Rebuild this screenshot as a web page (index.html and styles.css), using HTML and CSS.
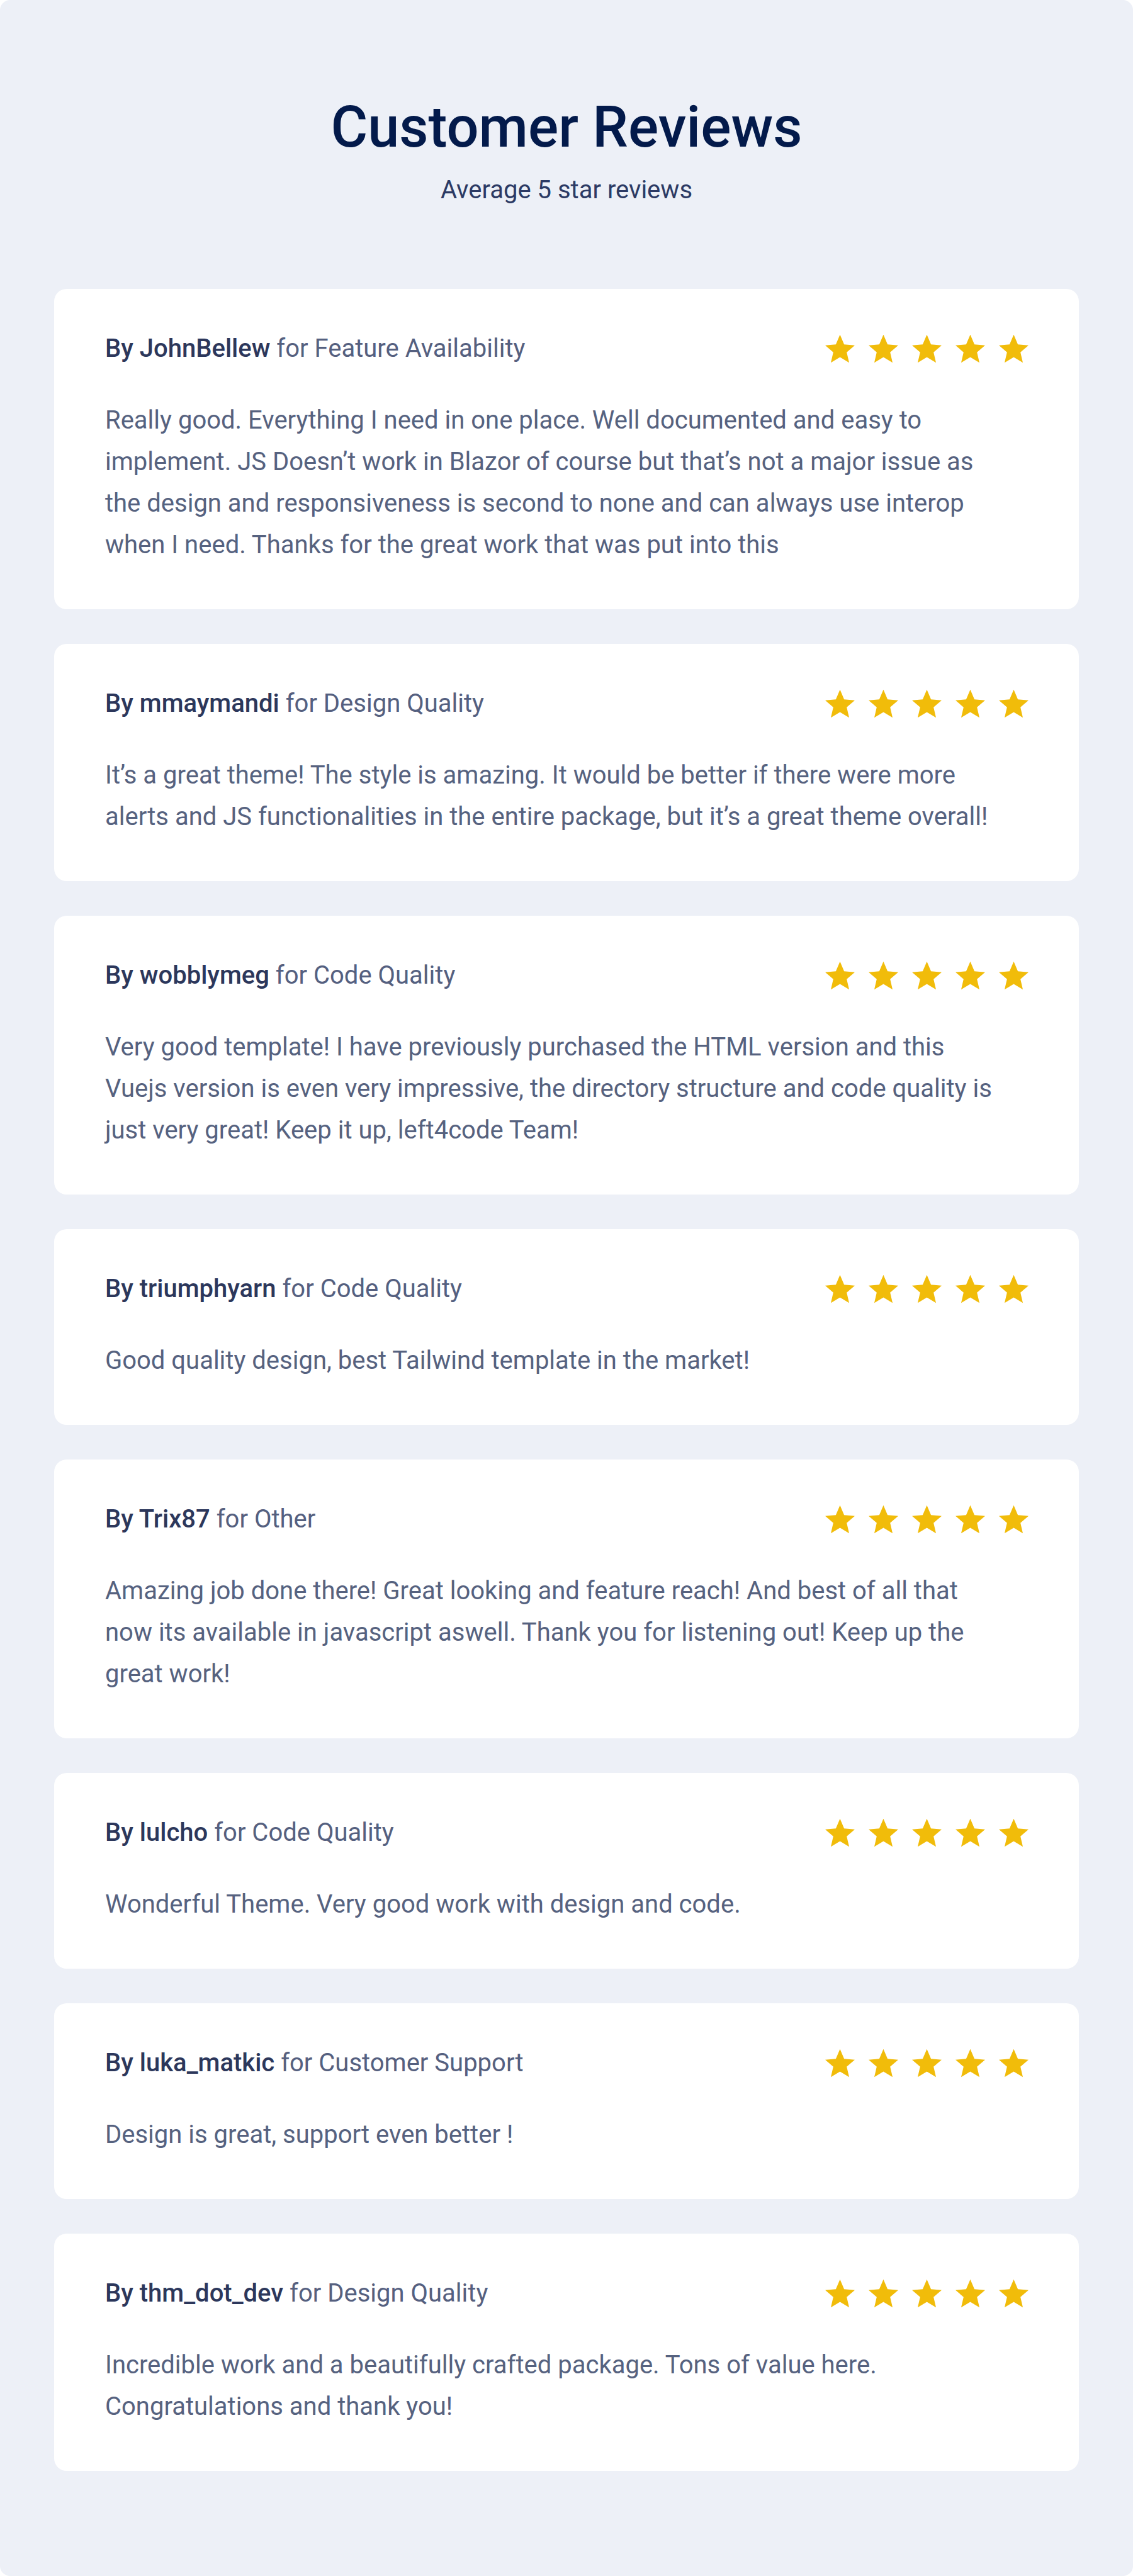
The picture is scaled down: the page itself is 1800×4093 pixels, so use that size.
FILE: index.html
```html
<!DOCTYPE html>
<html lang="en">
<head>
<meta charset="utf-8">
<title>Customer Reviews</title>
<link rel="stylesheet" href="styles.css">
</head>
<body>
<main class="page">
  <header class="intro">
    <h1 class="title">Customer Reviews</h1>
    <p class="subtitle">Average 5 star reviews</p>
  </header>
  <section class="reviews">
    <article class="card">
      <div class="card-head">
        <p class="by"><strong>By JohnBellew</strong> for Feature Availability</p>
        <div class="stars"><svg viewBox="2 2 20 19"><path d="M12 17.27L18.18 21l-1.64-7.03L22 9.24l-7.19-.61L12 2 9.19 8.63 2 9.24l5.46 4.73L5.820 21z"/></svg><svg viewBox="2 2 20 19"><path d="M12 17.27L18.18 21l-1.64-7.03L22 9.24l-7.19-.61L12 2 9.19 8.63 2 9.24l5.46 4.73L5.82 21z"/></svg><svg viewBox="2 2 20 19"><path d="M12 17.27L18.18 21l-1.64-7.03L22 9.24l-7.19-.61L12 2 9.19 8.63 2 9.24l5.46 4.73L5.82 21z"/></svg><svg viewBox="2 2 20 19"><path d="M12 17.27L18.18 21l-1.64-7.03L22 9.24l-7.19-.61L12 2 9.19 8.63 2 9.24l5.46 4.73L5.82 21z"/></svg><svg viewBox="2 2 20 19"><path d="M12 17.27L18.18 21l-1.64-7.03L22 9.24l-7.19-.61L12 2 9.19 8.63 2 9.24l5.46 4.73L5.82 21z"/></svg></div>
      </div>
      <p class="text">Really good. Everything I need in one place. Well documented and easy to implement. JS Doesn’t work in Blazor of course but that’s not a major issue as the design and responsiveness is second to none and can always use interop when I need. Thanks for the great work that was put into this</p>
    </article>
    <article class="card">
      <div class="card-head">
        <p class="by"><strong>By mmaymandi</strong> for Design Quality</p>
        <div class="stars"><svg viewBox="2 2 20 19"><path d="M12 17.27L18.18 21l-1.64-7.03L22 9.24l-7.19-.61L12 2 9.19 8.63 2 9.24l5.46 4.73L5.82 21z"/></svg><svg viewBox="2 2 20 19"><path d="M12 17.27L18.18 21l-1.64-7.03L22 9.24l-7.19-.61L12 2 9.19 8.63 2 9.24l5.46 4.73L5.82 21z"/></svg><svg viewBox="2 2 20 19"><path d="M12 17.27L18.18 21l-1.64-7.03L22 9.24l-7.19-.61L12 2 9.19 8.63 2 9.24l5.46 4.73L5.82 21z"/></svg><svg viewBox="2 2 20 19"><path d="M12 17.27L18.18 21l-1.64-7.03L22 9.24l-7.19-.61L12 2 9.19 8.63 2 9.24l5.46 4.73L5.82 21z"/></svg><svg viewBox="2 2 20 19"><path d="M12 17.27L18.18 21l-1.64-7.03L22 9.24l-7.19-.61L12 2 9.19 8.63 2 9.24l5.46 4.73L5.82 21z"/></svg></div>
      </div>
      <p class="text">It’s a great theme! The style is amazing. It would be better if there were more alerts and JS functionalities in the entire package, but it’s a great theme overall!</p>
    </article>
    <article class="card">
      <div class="card-head">
        <p class="by"><strong>By wobblymeg</strong> for Code Quality</p>
        <div class="stars"><svg viewBox="2 2 20 19"><path d="M12 17.27L18.18 21l-1.64-7.03L22 9.24l-7.19-.61L12 2 9.19 8.63 2 9.24l5.46 4.73L5.82 21z"/></svg><svg viewBox="2 2 20 19"><path d="M12 17.27L18.18 21l-1.64-7.03L22 9.24l-7.19-.61L12 2 9.19 8.63 2 9.24l5.46 4.73L5.82 21z"/></svg><svg viewBox="2 2 20 19"><path d="M12 17.27L18.18 21l-1.64-7.03L22 9.24l-7.19-.61L12 2 9.19 8.63 2 9.24l5.46 4.73L5.82 21z"/></svg><svg viewBox="2 2 20 19"><path d="M12 17.27L18.18 21l-1.64-7.03L22 9.24l-7.19-.61L12 2 9.19 8.63 2 9.24l5.46 4.73L5.82 21z"/></svg><svg viewBox="2 2 20 19"><path d="M12 17.27L18.18 21l-1.64-7.03L22 9.24l-7.19-.61L12 2 9.19 8.63 2 9.24l5.46 4.73L5.82 21z"/></svg></div>
      </div>
      <p class="text">Very good template! I have previously purchased the HTML version and this Vuejs version is even very impressive, the directory structure and code quality is just very great! Keep it up, left4code Team!</p>
    </article>
    <article class="card">
      <div class="card-head">
        <p class="by"><strong>By triumphyarn</strong> for Code Quality</p>
        <div class="stars"><svg viewBox="2 2 20 19"><path d="M12 17.27L18.18 21l-1.64-7.03L22 9.24l-7.19-.61L12 2 9.19 8.63 2 9.24l5.46 4.73L5.82 21z"/></svg><svg viewBox="2 2 20 19"><path d="M12 17.27L18.18 21l-1.64-7.03L22 9.24l-7.19-.61L12 2 9.19 8.63 2 9.24l5.46 4.73L5.82 21z"/></svg><svg viewBox="2 2 20 19"><path d="M12 17.27L18.18 21l-1.64-7.03L22 9.24l-7.19-.61L12 2 9.19 8.63 2 9.24l5.46 4.73L5.82 21z"/></svg><svg viewBox="2 2 20 19"><path d="M12 17.27L18.18 21l-1.64-7.03L22 9.24l-7.19-.61L12 2 9.19 8.63 2 9.24l5.46 4.73L5.82 21z"/></svg><svg viewBox="2 2 20 19"><path d="M12 17.27L18.18 21l-1.64-7.03L22 9.24l-7.19-.61L12 2 9.19 8.63 2 9.24l5.46 4.73L5.82 21z"/></svg></div>
      </div>
      <p class="text">Good quality design, best Tailwind template in the market!</p>
    </article>
    <article class="card">
      <div class="card-head">
        <p class="by"><strong>By Trix87</strong> for Other</p>
        <div class="stars"><svg viewBox="2 2 20 19"><path d="M12 17.27L18.18 21l-1.64-7.03L22 9.24l-7.19-.61L12 2 9.19 8.63 2 9.24l5.46 4.73L5.82 21z"/></svg><svg viewBox="2 2 20 19"><path d="M12 17.27L18.18 21l-1.64-7.03L22 9.24l-7.19-.61L12 2 9.19 8.63 2 9.24l5.46 4.73L5.82 21z"/></svg><svg viewBox="2 2 20 19"><path d="M12 17.27L18.18 21l-1.64-7.03L22 9.24l-7.19-.61L12 2 9.19 8.63 2 9.24l5.46 4.73L5.82 21z"/></svg><svg viewBox="2 2 20 19"><path d="M12 17.27L18.18 21l-1.64-7.03L22 9.24l-7.19-.61L12 2 9.19 8.63 2 9.24l5.46 4.73L5.82 21z"/></svg><svg viewBox="2 2 20 19"><path d="M12 17.27L18.18 21l-1.64-7.03L22 9.24l-7.19-.61L12 2 9.19 8.63 2 9.24l5.46 4.73L5.82 21z"/></svg></div>
      </div>
      <p class="text">Amazing job done there! Great looking and feature reach! And best of all that now its available in javascript aswell. Thank you for listening out! Keep up the great work!</p>
    </article>
    <article class="card">
      <div class="card-head">
        <p class="by"><strong>By lulcho</strong> for Code Quality</p>
        <div class="stars"><svg viewBox="2 2 20 19"><path d="M12 17.27L18.18 21l-1.64-7.03L22 9.24l-7.19-.61L12 2 9.19 8.63 2 9.24l5.46 4.73L5.82 21z"/></svg><svg viewBox="2 2 20 19"><path d="M12 17.27L18.18 21l-1.64-7.03L22 9.24l-7.19-.61L12 2 9.19 8.63 2 9.24l5.46 4.73L5.82 21z"/></svg><svg viewBox="2 2 20 19"><path d="M12 17.27L18.18 21l-1.64-7.03L22 9.24l-7.19-.61L12 2 9.19 8.63 2 9.24l5.46 4.73L5.82 21z"/></svg><svg viewBox="2 2 20 19"><path d="M12 17.27L18.18 21l-1.64-7.03L22 9.24l-7.19-.61L12 2 9.19 8.63 2 9.24l5.46 4.73L5.82 21z"/></svg><svg viewBox="2 2 20 19"><path d="M12 17.27L18.18 21l-1.64-7.03L22 9.24l-7.19-.61L12 2 9.19 8.63 2 9.24l5.46 4.73L5.82 21z"/></svg></div>
      </div>
      <p class="text">Wonderful Theme. Very good work with design and code.</p>
    </article>
    <article class="card">
      <div class="card-head">
        <p class="by"><strong>By luka_matkic</strong> for Customer Support</p>
        <div class="stars"><svg viewBox="2 2 20 19"><path d="M12 17.27L18.18 21l-1.64-7.03L22 9.24l-7.19-.61L12 2 9.19 8.63 2 9.24l5.46 4.73L5.82 21z"/></svg><svg viewBox="2 2 20 19"><path d="M12 17.27L18.18 21l-1.64-7.03L22 9.24l-7.19-.61L12 2 9.19 8.63 2 9.24l5.46 4.73L5.82 21z"/></svg><svg viewBox="2 2 20 19"><path d="M12 17.27L18.18 21l-1.64-7.03L22 9.24l-7.19-.61L12 2 9.19 8.63 2 9.24l5.46 4.73L5.82 21z"/></svg><svg viewBox="2 2 20 19"><path d="M12 17.27L18.18 21l-1.64-7.03L22 9.24l-7.19-.61L12 2 9.19 8.63 2 9.24l5.46 4.73L5.82 21z"/></svg><svg viewBox="2 2 20 19"><path d="M12 17.27L18.18 21l-1.64-7.03L22 9.24l-7.19-.61L12 2 9.19 8.63 2 9.24l5.46 4.73L5.82 21z"/></svg></div>
      </div>
      <p class="text">Design is great, support even better !</p>
    </article>
    <article class="card">
      <div class="card-head">
        <p class="by"><strong>By thm_dot_dev</strong> for Design Quality</p>
        <div class="stars"><svg viewBox="2 2 20 19"><path d="M12 17.27L18.18 21l-1.64-7.03L22 9.24l-7.19-.61L12 2 9.19 8.63 2 9.24l5.46 4.73L5.82 21z"/></svg><svg viewBox="2 2 20 19"><path d="M12 17.27L18.18 21l-1.64-7.03L22 9.24l-7.19-.61L12 2 9.19 8.63 2 9.24l5.46 4.73L5.82 21z"/></svg><svg viewBox="2 2 20 19"><path d="M12 17.27L18.18 21l-1.64-7.03L22 9.24l-7.19-.61L12 2 9.19 8.63 2 9.24l5.46 4.73L5.82 21z"/></svg><svg viewBox="2 2 20 19"><path d="M12 17.27L18.18 21l-1.64-7.03L22 9.24l-7.19-.61L12 2 9.19 8.63 2 9.24l5.46 4.73L5.82 21z"/></svg><svg viewBox="2 2 20 19"><path d="M12 17.27L18.18 21l-1.64-7.03L22 9.24l-7.19-.61L12 2 9.19 8.63 2 9.24l5.46 4.73L5.82 21z"/></svg></div>
      </div>
      <p class="text">Incredible work and a beautifully crafted package. Tons of value here. Congratulations and thank you!</p>
    </article>
  </section>
</main>
</body>
</html>
```

FILE: styles.css
```css
* { box-sizing: border-box; }

html, body {
  margin: 0;
  padding: 0;
  background: #ffffff;
}

body {
  font-family: Roboto, "Noto Sans", "Liberation Sans", sans-serif;
}

.page {
  min-height: 4093px;
  background: #edf0f7;
  border-radius: 16px;
  padding: 158px 86px 160px;
}

.intro {
  text-align: center;
}

.title {
  margin: 0;
  font-size: 90px;
  line-height: 90px;
  font-weight: 500;
  color: #031a4b;
}

.subtitle {
  margin: 30px 0 0;
  font-size: 40px;
  line-height: 48px;
  font-weight: 400;
  color: #2c3a64;
}

.reviews {
  margin-top: 133px;
  display: flex;
  flex-direction: column;
  gap: 55px;
}

.card {
  background: #ffffff;
  border-radius: 20px;
  padding: 72px 80px 69px 81px;
}

.card-head {
  display: flex;
  justify-content: space-between;
  align-items: center;
  height: 46px;
}

.by {
  margin: 0;
  font-size: 40px;
  line-height: 46px;
  color: #55607f;
}

.by strong {
  font-weight: 500;
  color: #2c375b;
}

.stars {
  display: flex;
  gap: 22px;
}

.stars svg {
  width: 47px;
  height: 46px;
  fill: #f1bc0a;
  display: block;
}

.text {
  margin: 58px 0 0;
  max-width: 1420px;
  font-size: 40px;
  line-height: 66px;
  color: #56627f;
}
```
